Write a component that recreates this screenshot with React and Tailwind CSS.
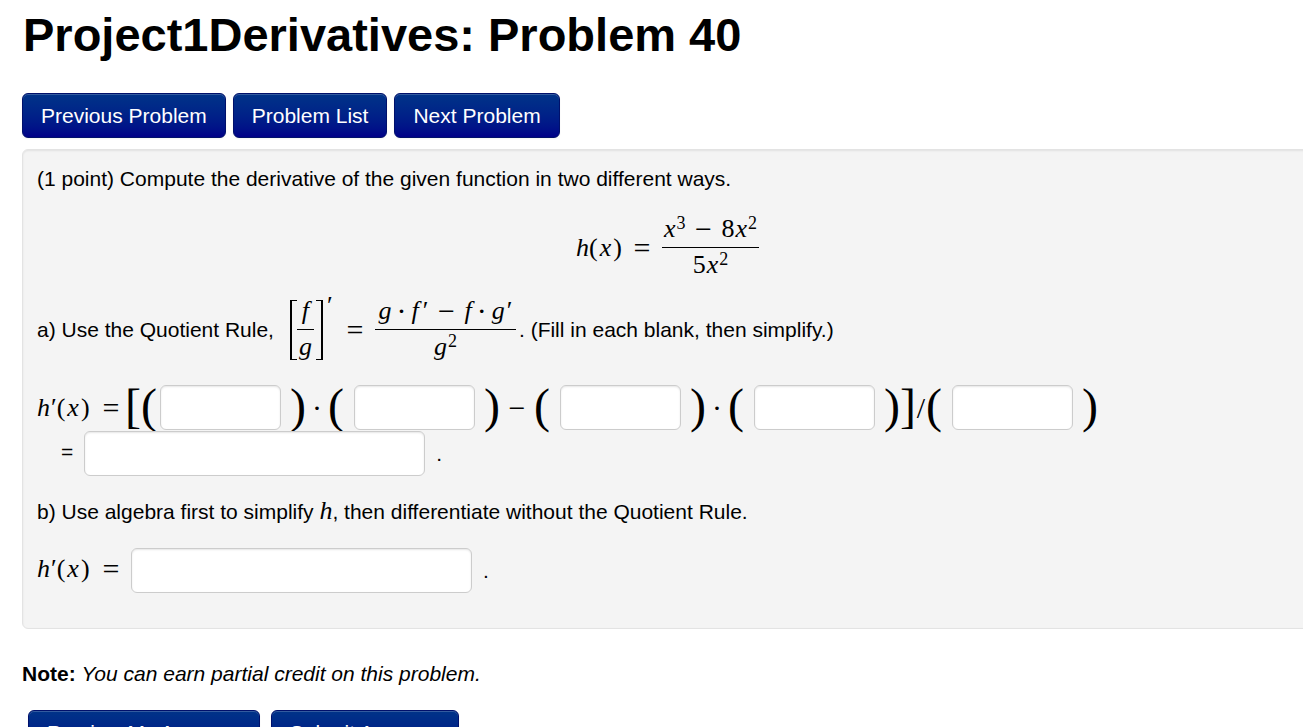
const inputStyle =
  "h-[45px] rounded-md border border-[#cccccc] bg-white px-2 text-[21px] shadow-[inset_0_1px_2px_rgba(0,0,0,0.1)] outline-none focus:border-[#52a8ec]";

function NavButton({ children, type = "button" }) {
  return (
    <button
      type={type}
      className="h-[45px] rounded-md border border-[#00106b] bg-linear-to-b from-[#003388] to-[#000088] px-[18px] text-[21px] leading-[30px] text-white shadow-[inset_0_1px_0_rgba(255,255,255,0.2),0_1px_2px_rgba(0,0,0,0.05)] cursor-pointer whitespace-nowrap"
    >
      {children}
    </button>
  );
}

// math text, variables are wrapped in <i>
function MathText({ children, className = "" }) {
  return (
    <span
      className={`font-['Liberation_Serif',serif] text-[26px] leading-[30px] whitespace-nowrap ${className}`}
    >
      {children}
    </span>
  );
}

function Sup({ children }) {
  return <sup className="-top-1.5 pl-px text-[18px] leading-[30px]">{children}</sup>;
}

function Fraction({ top, bottom, className = "" }) {
  return (
    <span className={`inline-flex flex-col ${className}`}>
      <MathText className="flex h-[34px] items-center justify-center border-b border-black pb-1">
        {top}
      </MathText>
      <MathText className="flex h-[34px] items-center justify-center">
        {bottom}
      </MathText>
    </span>
  );
}

// tall ( ) [ ] around the answer blanks
function Fence({ children }) {
  return (
    <span className="flex w-4 shrink-0 justify-center pb-1 font-['Liberation_Serif',serif] text-[48px] leading-[41px]">
      {children}
    </span>
  );
}

function Op({ children, className = "w-[22px]" }) {
  return (
    <span
      className={`flex shrink-0 justify-center font-['Liberation_Serif',serif] text-[30px] leading-[30px] ${className}`}
    >
      {children}
    </span>
  );
}

function Blank({ label, className = "ml-[10px]" }) {
  return (
    <input
      type="text"
      aria-label={label}
      className={`${inputStyle} mr-[9px] w-[121px] shrink-0 ${className}`}
    />
  );
}

function HPrime() {
  return (
    <MathText className="flex w-[83px] shrink-0 items-center">
      <i>h</i>
      <span className="pl-px">′</span>
      <span>(</span>
      <i className="px-0.5">x</i>
      <span>)</span>
      <Op className="ml-auto w-[18px]">=</Op>
    </MathText>
  );
}

export default function App() {
  return (
    <div className="overflow-x-hidden bg-white pb-5 pl-[22px] font-['Liberation_Sans',Arial,sans-serif] text-[21px] leading-[30px] text-black">
      <h1 className="pt-[5px] pl-px text-[47px] leading-[60px] font-bold whitespace-nowrap">
        Project1Derivatives: Problem 40
      </h1>

      <nav className="mt-7 flex gap-[7px]">
        <NavButton>Previous Problem</NavButton>
        <NavButton>Problem List</NavButton>
        <NavButton>Next Problem</NavButton>
      </nav>

      <form onSubmit={(ev) => ev.preventDefault()}>
        <section className="mt-[11px] -mr-[10px] rounded-md border border-[#e3e3e3] bg-[#f4f4f4] px-[14px] pt-[14px] pb-[35px] shadow-[inset_0_1px_2px_rgba(0,0,0,0.08)]">
          <p>
            (1 point) Compute the derivative of the given function in two
            different ways.
          </p>

          <div className="mt-5 flex items-center justify-center">
            <MathText className="flex items-center">
              <i>h</i>
              <span>(</span>
              <i className="px-0.5">x</i>
              <span>)</span>
              <Op className="w-10">=</Op>
            </MathText>
            <Fraction
              className="w-[97px]"
              top={
                <>
                  <i>x</i>
                  <Sup>3</Sup>
                  <Op className="w-9">−</Op>
                  8<i className="pl-px">x</i>
                  <Sup>2</Sup>
                </>
              }
              bottom={
                <>
                  5<i className="pl-px">x</i>
                  <Sup>2</Sup>
                </>
              }
            />
          </div>

          <div className="mt-[14px] flex items-center">
            <span className="whitespace-nowrap">a) Use the Quotient Rule,</span>
            <span className="ml-4 flex items-center">
              <span className="h-[60px] w-[7px] border-y border-l-2 border-black" />
              <Fraction className="mr-0.5 w-[17px]" top={<i>f</i>} bottom={<i>g</i>} />
              <span className="h-[60px] w-[7px] border-y border-r-2 border-black" />
              <MathText className="-mt-12 w-3 pl-1">′</MathText>
            </span>
            <Op className="w-10">=</Op>
            <Fraction
              className="w-[141px]"
              top={
                <>
                  <i>g</i>
                  <Op className="w-5">·</Op>
                  <i>f</i>
                  <span className="pl-1">′</span>
                  <Op className="w-9">−</Op>
                  <i>f</i>
                  <Op className="w-5">·</Op>
                  <i>g</i>
                  <span className="pl-0.5">′</span>
                </>
              }
              bottom={
                <>
                  <i>g</i>
                  <Sup>2</Sup>
                </>
              }
            />
            <span className="ml-[3px] whitespace-nowrap">
              . (Fill in each blank, then simplify.)
            </span>
          </div>

          <div className="mt-[21px] flex items-center">
            <HPrime />
            <span className="flex pl-[5px]">
              <Fence>[</Fence>
              <Fence>(</Fence>
            </span>
            <Blank label="g" className="ml-[3px]" />
            <Fence>)</Fence>
            <Op>·</Op>
            <Fence>(</Fence>
            <Blank label="f prime" />
            <Fence>)</Fence>
            <Op className="w-[34px]">−</Op>
            <Fence>(</Fence>
            <Blank label="f" />
            <Fence>)</Fence>
            <Op>·</Op>
            <Fence>(</Fence>
            <Blank label="g prime" />
            <Fence>)</Fence>
            <Fence>]</Fence>
            <Op className="w-[10px]">/</Op>
            <Fence>(</Fence>
            <Blank label="denominator" />
            <Fence>)</Fence>
          </div>

          <div className="mt-px flex items-center pl-6">
            <label htmlFor="simplified" className="pb-1">
              =
            </label>
            <input
              id="simplified"
              type="text"
              className={`${inputStyle} mr-[11px] ml-[11px] w-[341px]`}
            />
            <span>.</span>
          </div>

          <p className="mt-5">
            b) Use algebra first to simplify{" "}
            <MathText>
              <i>h</i>
            </MathText>
            , then differentiate without the Quotient Rule.
          </p>

          <div className="mt-[21px] flex items-center">
            <label htmlFor="part-b" className="pb-1">
              <HPrime />
            </label>
            <input
              id="part-b"
              type="text"
              className={`${inputStyle} mr-[11px] ml-[11px] w-[341px]`}
            />
            <span>.</span>
          </div>
        </section>

        <p className="mt-[30px]">
          <b>Note:</b> <i>You can earn partial credit on this problem.</i>
        </p>

        <div className="mt-[21px] ml-[6px] flex gap-[11px]">
          <NavButton type="submit">Preview My Answers</NavButton>
          <NavButton type="submit">Submit Answers</NavButton>
        </div>
      </form>
    </div>
  );
}
